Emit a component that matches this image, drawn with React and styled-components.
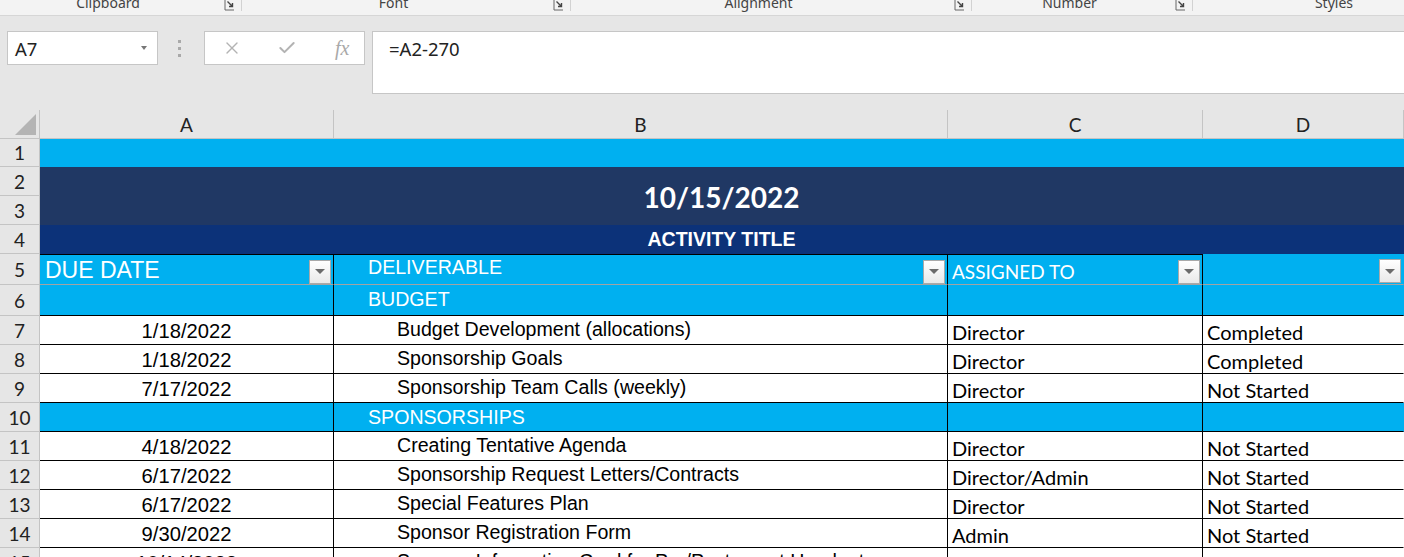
import React from "react";
import styled, { createGlobalStyle } from "styled-components";
import { X, Check } from "lucide-react";

const CYAN = "#00b0f0";
const NAVY = "#203864";
const DEEP = "#0c3279";
const INK = "#000";
const HEAD_LINE = "#c4c4c4";

const GlobalStyle = createGlobalStyle`
  html, body { margin: 0; padding: 0; background: #e6e6e6; overflow: hidden; }
  body { width: 1404px; height: 557px; font-family: "Noto Sans", sans-serif; }
`;

// ribbon group captions (cut off at the top)
const Ribbon = styled.div`
  height: 15px;
  background: #f3f3f3;
  border-bottom: 1px solid #d6d6d6;
  display: flex;
  overflow: hidden;
`;

const Group = styled.div`
  width: ${(p) => p.$w}px;
  flex: none;
  display: flex;
  align-items: flex-start;
`;

const GroupLabel = styled.span`
  flex: 1;
  text-align: center;
  font-size: 14px;
  line-height: 18px;
  margin-top: -6px;
  padding-right: 8px;
  color: #444;
`;

const Sep = styled.span`
  width: 1px;
  height: 11px;
  background: #d2d2d2;
  margin-left: 6px;
`;

const Launcher = () => (
  <svg width="11" height="11" viewBox="0 0 11 11">
    <path d="M1 0v10h9" fill="none" stroke="#666" strokeWidth="1" />
    <path d="M3.5 1.5l5 5M8.5 3v3.5H5" fill="none" stroke="#444" strokeWidth="1.4" />
  </svg>
);

// formula bar
const FormulaArea = styled.div`
  height: 94px;
  box-sizing: border-box;
  padding: 15px 0 0 7px;
  display: flex;
  align-items: flex-start;
`;

const NameBox = styled.div`
  width: 151px;
  height: 34px;
  box-sizing: border-box;
  background: #fff;
  border: 1px solid #c6c6c6;
  display: flex;
  align-items: center;
  padding: 0 10px 0 7px;
  font-size: 18.5px;
  color: #222;
  span { flex: 1; }
  &::after {
    content: "";
    border-left: 3.5px solid transparent;
    border-right: 3.5px solid transparent;
    border-top: 4px solid #777;
  }
`;

const Dots = styled.div`
  width: 3px;
  margin: 9px 23px 0 20px;
  display: flex;
  flex-direction: column;
  gap: 4px;
  span { width: 3px; height: 3px; background: #a9a9a9; }
`;

const ButtonBox = styled.div`
  width: 161px;
  height: 34px;
  box-sizing: border-box;
  background: #fff;
  border: 1px solid #c6c6c6;
  display: flex;
  align-items: center;
  padding-left: 17px;
  gap: 35px;
  color: #b3b3b3;
`;

const Fx = styled.span`
  font-family: "Liberation Serif", serif;
  font-style: italic;
  font-size: 20px;
  color: #a9a9a9;
  margin-left: 3px;
`;

const FormulaInput = styled.div`
  flex: 1;
  height: 63px;
  margin-left: 7px;
  box-sizing: border-box;
  background: #fff;
  border: 1px solid #c6c6c6;
  border-right: none;
  padding: 4px 0 0 16px;
  font-size: 18.5px;
  line-height: 26px;
  color: #222;
`;

// the sheet
const Sheet = styled.div`
  display: grid;
  grid-template-columns: 40px 294px 614px 255px 201px;
  grid-template-rows: 29px 28px 29px 29px 29px 31px 31px repeat(9, 29px);
`;

const Corner = styled.div`
  background: #e6e6e6;
  border-right: 1px solid ${HEAD_LINE};
  border-bottom: 1px solid ${HEAD_LINE};
  display: flex;
  align-items: flex-end;
  justify-content: flex-end;
  padding: 0 3px 3px 0;
  &::after {
    content: "";
    width: 0;
    height: 0;
    border-left: 21px solid transparent;
    border-bottom: 21px solid #b4b4b4;
  }
`;

const ColHead = styled.div`
  background: #e6e6e6;
  border-right: 1px solid ${HEAD_LINE};
  border-bottom: 1px solid ${HEAD_LINE};
  display: flex;
  align-items: center;
  justify-content: center;
  font-family: Lato, sans-serif;
  font-size: 19px;
  color: #222;
`;

const RowHead = styled.div`
  background: #e6e6e6;
  border-right: 1px solid ${HEAD_LINE};
  border-bottom: 1px solid ${HEAD_LINE};
  display: flex;
  align-items: center;
  justify-content: center;
  font-family: Lato, sans-serif;
  font-size: 19px;
  color: #222;
`;

const Cell = styled.div`
  box-sizing: border-box;
  grid-column: span ${(p) => p.$span || 1};
  grid-row: span ${(p) => p.$rows || 1};
  background: ${(p) => p.$bg || "#fff"};
  border-right: 1px solid ${(p) => p.$right || "transparent"};
  border-bottom: 1px solid ${(p) => p.$bottom || "transparent"};
  border-top: ${(p) => (p.$top ? `1px solid ${p.$top}` : "none")};
  display: flex;
  align-items: center;
  justify-content: ${(p) => p.$align || "flex-start"};
  padding-left: ${(p) => p.$indent || 0}px;
  overflow: hidden;
  white-space: nowrap;
  color: ${(p) => p.$color || "#000"};
  font-family: ${(p) => (p.$calibri ? "Lato, sans-serif" : '"Liberation Sans", Arial, sans-serif')};
  font-size: ${(p) => p.$size || 19.6}px;
  font-weight: ${(p) => (p.$bold ? 700 : 400)};
`;

const CellText = styled.span`
  margin-top: ${(p) => p.$shift || 0}px;
`;

const FilterBtn = styled.span`
  flex: none;
  width: 22px;
  height: 24px;
  box-sizing: border-box;
  margin: 4px 2px 0 auto;
  border: 1px solid #a9a9a9;
  background: linear-gradient(#ffffff, #e9e9e9);
  display: flex;
  align-items: center;
  justify-content: center;
  &::after {
    content: "";
    border-left: 5px solid transparent;
    border-right: 5px solid transparent;
    border-top: 5px solid #6b6b6b;
  }
`;

const tasks = [
  { n: 7, date: "1/18/2022", task: "Budget Development (allocations)", who: "Director", status: "Completed" },
  { n: 8, date: "1/18/2022", task: "Sponsorship Goals", who: "Director", status: "Completed" },
  { n: 9, date: "7/17/2022", task: "Sponsorship Team Calls (weekly)", who: "Director", status: "Not Started" },
  { n: 10, section: "SPONSORSHIPS" },
  { n: 11, date: "4/18/2022", task: "Creating Tentative Agenda", who: "Director", status: "Not Started" },
  { n: 12, date: "6/17/2022", task: "Sponsorship Request Letters/Contracts", who: "Director/Admin", status: "Not Started" },
  { n: 13, date: "6/17/2022", task: "Special Features Plan", who: "Director", status: "Not Started" },
  { n: 14, date: "9/30/2022", task: "Sponsor Registration Form", who: "Admin", status: "Not Started" },
  { n: 15, date: "10/14/2022", task: "Sponsor Information Card for Pre/Post-event Handouts", who: "", status: "" },
];

const groups = [
  { w: 242, label: "Clipboard", launcher: true },
  { w: 329, label: "Font", launcher: true },
  { w: 401, label: "Alignment", launcher: true },
  { w: 221, label: "Number", launcher: true },
  { w: 290, label: "Styles" },
];

const TaskRow = ({ row }) => {
  if (row.section) {
    return (
      <>
        <RowHead>{row.n}</RowHead>
        <Cell $bg={CYAN} $right={INK} $bottom={INK} />
        <Cell $bg={CYAN} $right={INK} $bottom={INK} $indent={34} $color="#fff">
          <CellText>{row.section}</CellText>
        </Cell>
        <Cell $bg={CYAN} $right={INK} $bottom={INK} />
        <Cell $bg={CYAN} $bottom={INK} />
      </>
    );
  }
  return (
    <>
      <RowHead>{row.n}</RowHead>
      <Cell $right={INK} $bottom={INK} $align="center" $size={20.2}>
        <CellText $shift={3}>{row.date}</CellText>
      </Cell>
      <Cell $right={INK} $bottom={INK} $indent={63}>
        <CellText $shift={-1}>{row.task}</CellText>
      </Cell>
      <Cell $right={INK} $bottom={INK} $indent={4} $calibri $size={20}>
        <CellText $shift={3}>{row.who}</CellText>
      </Cell>
      <Cell $bottom={INK} $indent={4} $calibri $size={20}>
        <CellText $shift={3}>{row.status}</CellText>
      </Cell>
    </>
  );
};

export default function App() {
  return (
    <>
      <GlobalStyle />
      <Ribbon>
        {groups.map((g) => (
          <Group key={g.label} $w={g.w}>
            <GroupLabel>{g.label}</GroupLabel>
            {g.launcher && <Launcher />}
            {g.launcher && <Sep />}
          </Group>
        ))}
      </Ribbon>

      <FormulaArea>
        <NameBox>
          <span>A7</span>
        </NameBox>
        <Dots>
          <span />
          <span />
          <span />
        </Dots>
        <ButtonBox>
          <X size={20} strokeWidth={1.6} />
          <Check size={20} strokeWidth={2.4} />
          <Fx>fx</Fx>
        </ButtonBox>
        <FormulaInput>=A2-270</FormulaInput>
      </FormulaArea>

      <Sheet>
        <Corner />
        <ColHead>A</ColHead>
        <ColHead>B</ColHead>
        <ColHead>C</ColHead>
        <ColHead>D</ColHead>

        <RowHead>1</RowHead>
        <Cell $bg={CYAN} $span={4} />

        <RowHead>2</RowHead>
        <Cell $bg={NAVY} $span={4} $rows={2} $align="center" $calibri $bold $size={28} $color="#fff">
          <CellText $shift={2}>10/15/2022</CellText>
        </Cell>
        <RowHead>3</RowHead>

        <RowHead>4</RowHead>
        <Cell $bg={DEEP} $span={4} $align="center" $bold $size={19.5} $color="#fff">
          <CellText $shift={1}>ACTIVITY TITLE</CellText>
        </Cell>

        <RowHead>5</RowHead>
        <Cell $bg={CYAN} $top={INK} $right={INK} $bottom="#a3a3a3" $indent={5} $size={23} $color="#fff">
          <CellText $shift={1}>DUE DATE</CellText>
          <FilterBtn />
        </Cell>
        <Cell $bg={CYAN} $top={INK} $right={INK} $bottom="#a3a3a3" $indent={34} $color="#fff">
          <CellText $shift={-4}>DELIVERABLE</CellText>
          <FilterBtn />
        </Cell>
        <Cell $bg={CYAN} $top={INK} $right={INK} $bottom="#a3a3a3" $indent={4} $calibri $size={19} $color="#fff">
          <CellText $shift={3}>ASSIGNED TO</CellText>
          <FilterBtn />
        </Cell>
        <Cell $bg={CYAN} $bottom="#a3a3a3">
          <FilterBtn />
        </Cell>

        <RowHead>6</RowHead>
        <Cell $bg={CYAN} $right={INK} $bottom={INK} />
        <Cell $bg={CYAN} $right={INK} $bottom={INK} $indent={34} $color="#fff">
          <CellText $shift={-2}>BUDGET</CellText>
        </Cell>
        <Cell $bg={CYAN} $right={INK} $bottom={INK} />
        <Cell $bg={CYAN} $bottom={INK} />

        {tasks.map((row) => (
          <TaskRow key={row.n} row={row} />
        ))}
      </Sheet>
    </>
  );
}
